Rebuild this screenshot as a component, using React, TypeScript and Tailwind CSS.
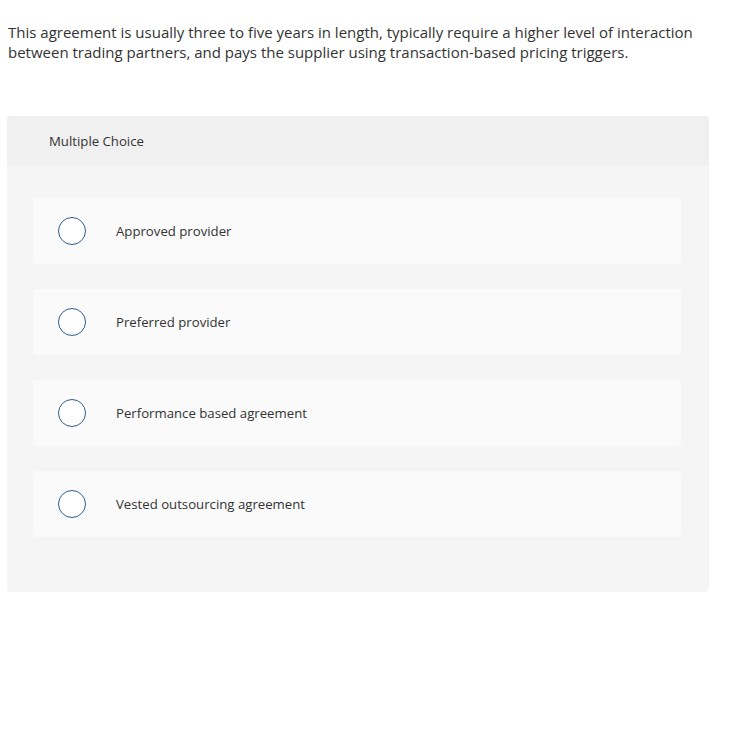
const OPTIONS = [
  'Approved provider',
  'Preferred provider',
  'Performance based agreement',
  'Vested outsourcing agreement',
];

export default function App() {
  return (
    <div className="w-[756px] h-[744px] bg-white font-['Open_Sans',sans-serif] text-[#333]">
      {/* Question */}
      <p className="pl-2 pr-8 pt-[22px] text-[15px] leading-[20px] text-[#333]">
        This agreement is usually three to five years in length, typically require a higher level of interaction
        between trading partners, and pays the supplier using transaction-based pricing triggers.
      </p>

      {/* Answer panel */}
      <div className="ml-[7px] mt-[54px] w-[702px] rounded-[4px] bg-[#f5f5f5] overflow-hidden">
        <div className="h-[50px] bg-[#f0f0f0] flex items-center pl-[42px] pt-[1px] text-[13.2px] text-[#333]">
          Multiple Choice
        </div>
        <div className="pl-[26px] pr-[28px] pt-[32px] pb-[55px] flex flex-col gap-[25px]">
          {OPTIONS.map(opt => (
            <div key={opt} className="h-[66px] rounded-[3px] bg-[#fafafa] flex items-center">
              <span className="ml-[25px] w-[28px] h-[28px] rounded-full border-[1.5px] border-[#2e5d8c] bg-white" />
              <span className="ml-[30px] pt-[1px] text-[13.2px] text-[#333]">{opt}</span>
            </div>
          ))}
        </div>
      </div>
    </div>
  );
}
